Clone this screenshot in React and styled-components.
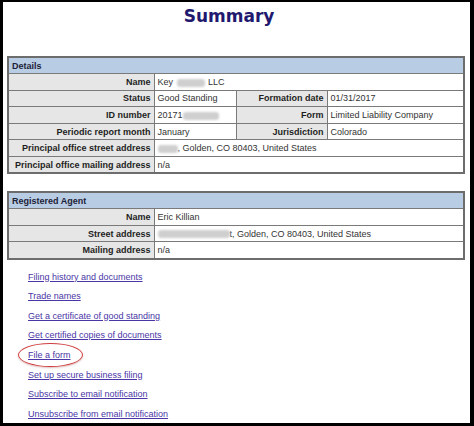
import React from "react";
import styled, { createGlobalStyle } from "styled-components";

const GlobalStyle = createGlobalStyle`
	html, body {
		margin: 0;
		padding: 0;
		background: #000;
	}
	* {
		box-sizing: border-box;
	}
`;

const Frame = styled.div`
	width: 474px;
	height: 426px;
	border-style: solid;
	border-color: #000;
	border-width: 2px 4px 3px 3px;
	background: #fff;
	overflow: hidden;
	padding: 0 1px 0 4px;
	font-family: "Liberation Sans", Arial, sans-serif;
	font-size: 9px;
	color: #222;
`;

const Title = styled.h1`
	margin: 0;
	height: 54px;
	padding: 4px 18px 0 0;
	text-align: center;
	font-family: "DejaVu Sans", Verdana, sans-serif;
	font-weight: bold;
	font-size: 17px;
	line-height: 20px;
	color: #22196f;
`;

const Table = styled.table`
	width: 458px;
	border-collapse: collapse;
	border: 2px solid #6d6d6d;
	margin-bottom: ${(p) => p.$gap || 0}px;
	table-layout: fixed;

	td {
		border: 1px solid #7a7a7a;
		height: 16.6px;
		padding: 0 3px;
		white-space: nowrap;
		overflow: hidden;
		line-height: 12px;
	}
`;

const Head = styled.td`
	background: #b8cce4;
	font-weight: bold;
	color: #1d2238;
	text-align: left;
`;

const Label = styled.td`
	background: #e6e6e6;
	font-weight: bold;
	text-align: right;
	color: #1e1e1e;
`;

const Value = styled.td`
	background: #fff;
	text-align: left;
	color: #333;
`;

const Redact = styled.span`
	display: inline-block;
	vertical-align: middle;
	width: ${(p) => p.$w}px;
	height: 8px;
	margin: 0 ${(p) => p.$m ?? 1}px;
	background: #cfcfcf;
	border-radius: 3px;
	filter: blur(1.2px);
`;

const Links = styled.ul`
	list-style: none;
	margin: 0;
	padding: 8px 0 0 21px;
`;

const LinkItem = styled.li`
	height: 19.6px;
	line-height: 19.6px;
`;

const Link = styled.a`
	position: relative;
	color: #4a36a6;
	text-decoration: underline;
	font-size: 9px;
	cursor: pointer;

	${(p) =>
		p.$circled &&
		`
		&::after {
			content: "";
			position: absolute;
			left: -10px;
			right: -12px;
			top: -7px;
			bottom: -7px;
			border: 1.5px solid #cf3d3d;
			border-radius: 50%;
			box-shadow: 0 1px 2px rgba(120, 0, 0, 0.25);
		}
	`}
`;

const links = [
	"Filing history and documents",
	"Trade names",
	"Get a certificate of good standing",
	"Get certified copies of documents",
	"File a form",
	"Set up secure business filing",
	"Subscribe to email notification",
	"Unsubscribe from email notification",
];

export default function App() {
	return (
		<>
			<GlobalStyle />
			<Frame>
				<Title>Summary</Title>

				<Table $gap={17}>
					<colgroup>
						<col style={{ width: 146 }} />
						<col style={{ width: 82 }} />
						<col style={{ width: 91 }} />
						<col />
					</colgroup>
					<tbody>
						<tr>
							<Head colSpan={4}>Details</Head>
						</tr>
						<tr>
							<Label>Name</Label>
							<Value colSpan={3}>
								Key <Redact $w={28} /> LLC
							</Value>
						</tr>
						<tr>
							<Label>Status</Label>
							<Value>Good Standing</Value>
							<Label>Formation date</Label>
							<Value>01/31/2017</Value>
						</tr>
						<tr>
							<Label>ID number</Label>
							<Value>
								20171
								<Redact $w={36} $m={0} />
							</Value>
							<Label>Form</Label>
							<Value>Limited Liability Company</Value>
						</tr>
						<tr>
							<Label>Periodic report month</Label>
							<Value>January</Value>
							<Label>Jurisdiction</Label>
							<Value>Colorado</Value>
						</tr>
						<tr>
							<Label>Principal office street address</Label>
							<Value colSpan={3}>
								<Redact $w={20} $m={0} />, Golden, CO 80403, United States
							</Value>
						</tr>
						<tr>
							<Label>Principal office mailing address</Label>
							<Value colSpan={3}>n/a</Value>
						</tr>
					</tbody>
				</Table>

				<Table>
					<colgroup>
						<col style={{ width: 146 }} />
						<col />
					</colgroup>
					<tbody>
						<tr>
							<Head colSpan={2}>Registered Agent</Head>
						</tr>
						<tr>
							<Label>Name</Label>
							<Value>Eric Killian</Value>
						</tr>
						<tr>
							<Label>Street address</Label>
							<Value>
								<Redact $w={72} $m={0} />t, Golden, CO 80403, United States
							</Value>
						</tr>
						<tr>
							<Label>Mailing address</Label>
							<Value>n/a</Value>
						</tr>
					</tbody>
				</Table>

				<Links>
					{links.map((text) => (
						<LinkItem key={text}>
							<Link $circled={text === "File a form"}>{text}</Link>
						</LinkItem>
					))}
				</Links>
			</Frame>
		</>
	);
}
